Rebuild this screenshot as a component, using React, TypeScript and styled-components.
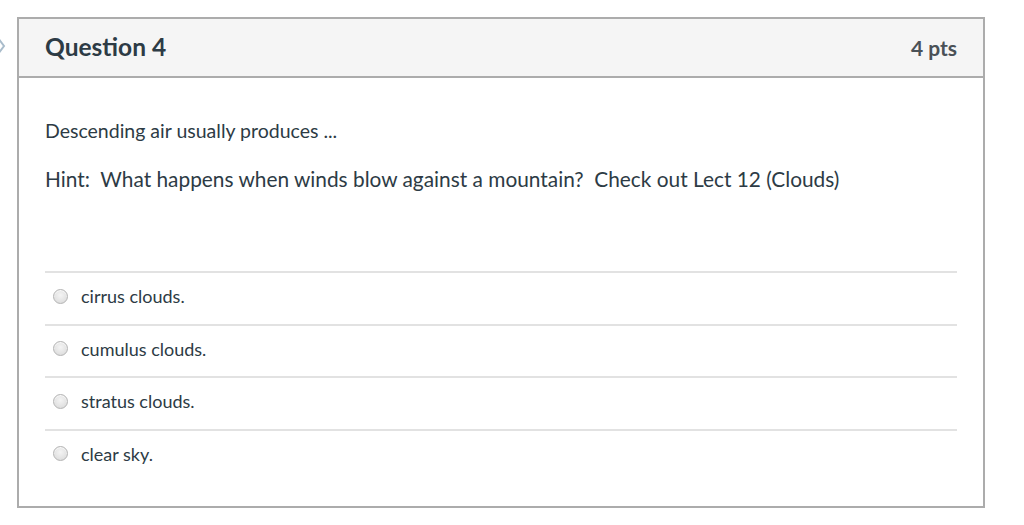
import React from 'react';
import styled, { createGlobalStyle } from 'styled-components';

const GlobalStyle = createGlobalStyle`
    html, body {
        margin: 0;
        padding: 0;
        background: #ffffff;
        font-family: Lato, "Open Sans", "Liberation Sans", sans-serif;
        color: #2d3b45;
    }
`;

const Page = styled.div`
    position: relative;
    padding: 17px 0 0 17px;
    width: 1024px;
    height: 525px;
    box-sizing: border-box;
`;

const NavArrow = styled.svg`
    position: absolute;
    left: -4px;
    top: 36px;
`;

const Card = styled.div`
    width: 968px;
    box-sizing: border-box;
    border: 2px solid #acacac;
    background: #ffffff;
`;

const CardHeader = styled.div`
    display: flex;
    align-items: center;
    justify-content: space-between;
    height: 57px;
    padding: 0 26px;
    background: #f5f5f5;
    border-bottom: 2px solid #acacac;
`;

const Title = styled.h2`
    margin: 0 0 2px 0;
    font-size: 24.5px;
    font-weight: 700;
    color: #2d3b45;
`;

const Points = styled.span`
    font-size: 21px;
    font-weight: 700;
    color: #4a5157;
`;

const CardBody = styled.div`
    padding: 40px 26px 25px 26px;
`;

const Paragraph = styled.p<{ $size: number }>`
    margin: 0 0 22px 0;
    font-size: ${(p) => p.$size}px;
    line-height: 26px;
    white-space: pre;
`;

const AnswerList = styled.div`
    margin-top: 79px;
    display: flex;
    flex-direction: column;
`;

const AnswerRow = styled.label`
    display: flex;
    align-items: center;
    gap: 13px;
    height: 46.5px;
    padding: 0 0 4px 8px;
    border-top: 2px solid #e2e2e2;
    font-size: 18px;
    color: #2d3b45;
`;

const Radio = styled.span`
    width: 13px;
    height: 13px;
    border-radius: 50%;
    border: 1px solid #b4b4b4;
    background: radial-gradient(circle at 50% 40%, #f4f4f4 0%, #e0e0e0 70%, #cfcfcf 100%);
    box-shadow: inset 0 1px 1px rgba(255, 255, 255, 0.8);
`;

const answers = ['cirrus clouds.', 'cumulus clouds.', 'stratus clouds.', 'clear sky.'];

export default function App() {
    return (
        <>
            <GlobalStyle />
            <Page>
                <NavArrow width="10" height="20" viewBox="0 0 10 20">
                    <polyline points="2,2 8,10 2,18" fill="none" stroke="#a9bccb" strokeWidth="2" />
                </NavArrow>
                <Card>
                    <CardHeader>
                        <Title>Question 4</Title>
                        <Points>4 pts</Points>
                    </CardHeader>
                    <CardBody>
                        <Paragraph $size={19.5}>Descending air usually produces ...</Paragraph>
                        <Paragraph $size={20.85}>
                            {'Hint:  What happens when winds blow against a mountain?  Check out Lect 12 (Clouds)'}
                        </Paragraph>
                        <AnswerList>
                            {answers.map((a) => (
                                <AnswerRow key={a}>
                                    <Radio />
                                    {a}
                                </AnswerRow>
                            ))}
                        </AnswerList>
                    </CardBody>
                </Card>
            </Page>
        </>
    );
}
